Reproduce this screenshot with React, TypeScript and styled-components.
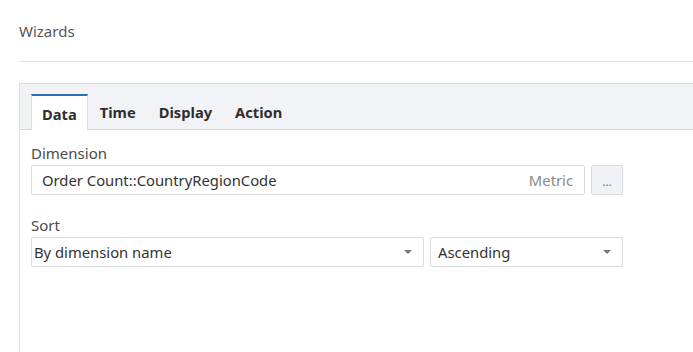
import React, { useState } from 'react';
import styled, { createGlobalStyle } from 'styled-components';

const GlobalStyle = createGlobalStyle`
  html, body {
    margin: 0;
    padding: 0;
    background: #fff;
  }

  body {
    font-family: 'Noto Sans', 'Open Sans', sans-serif;
    color: #333;
    overflow: hidden;
  }
`;

const Page = styled.div`
  width: 693px;
  height: 352px;
  padding: 0 0 0 19px;
  box-sizing: border-box;
  overflow: hidden;
  display: flex;
  flex-direction: column;
`;

const Title = styled.h1`
  margin: 0 0 21px;
  padding-top: 21px;
  height: 62px;
  box-sizing: border-box;
  font-size: 15px;
  font-weight: 400;
  line-height: 20px;
  color: #555;
  border-bottom: 1px solid #e2e2e2;
`;

const Panel = styled.section`
  flex: 1;
  border-left: 1px solid #dcdde0;
  border-top: 1px solid #dcdde0;
  box-sizing: border-box;
`;

const TabStrip = styled.div`
  display: flex;
  align-items: flex-end;
  height: 46px;
  padding-left: 11px;
  box-sizing: border-box;
  background: #f2f3f7;
  border-bottom: 1px solid #d5d6da;
`;

const Tab = styled.button<{ active?: boolean }>`
  all: unset;
  cursor: pointer;
  box-sizing: border-box;
  height: ${(p) => (p.active ? '36px' : '34px')};
  margin-bottom: ${(p) => (p.active ? '-1px' : '0')};
  padding: ${(p) => (p.active ? '1px 10px 0' : '0 11px 0 12px')};
  display: flex;
  align-items: center;
  font-family: 'Noto Sans', 'Open Sans', sans-serif;
  font-size: 14.7px;
  font-weight: 700;
  color: #2e2e2e;
  background: ${(p) => (p.active ? '#fff' : 'transparent')};
  border-top: ${(p) => (p.active ? '2px solid #2a6dba' : 'none')};
  border-left: ${(p) => (p.active ? '1px solid #dcdde0' : 'none')};
  border-right: ${(p) => (p.active ? '1px solid #dcdde0' : 'none')};
`;

const Body = styled.div`
  padding: 13px 0 0 11px;
  display: flex;
  flex-direction: column;
`;

const Label = styled.div`
  font-size: 15px;
  line-height: 20px;
  color: #4a4a4a;
  margin-bottom: 2px;
`;

const Row = styled.div`
  display: flex;
  gap: 6px;
  margin-bottom: 20px;
`;

const Field = styled.div<{ width: number; padLeft?: number }>`
  width: ${(p) => p.width}px;
  height: 30px;
  box-sizing: border-box;
  border: 1px solid #d9dadd;
  border-radius: 2px;
  background: #fff;
  display: flex;
  align-items: center;
  padding: 0 11px 0 ${(p) => p.padLeft ?? 2}px;
  font-size: 14.8px;
  color: #333;
`;

const FieldText = styled.span`
  flex: 1;
  white-space: nowrap;
`;

const Hint = styled.span`
  color: #8a8a8a;
`;

const Arrow = styled.span`
  width: 0;
  height: 0;
  border-left: 4px solid transparent;
  border-right: 4px solid transparent;
  border-top: 4px solid #777;
`;

const DotsButton = styled.button`
  all: unset;
  width: 32px;
  height: 30px;
  box-sizing: border-box;
  border: 1px solid #d9dadd;
  border-radius: 2px;
  background: #f1f2f6;
  color: #777;
  font-family: 'Noto Sans', 'Open Sans', sans-serif;
  font-size: 12px;
  display: flex;
  align-items: center;
  justify-content: center;
  padding-top: 2px;
`;

const tabs = ['Data', 'Time', 'Display', 'Action'];

function App(): JSX.Element {
  const [current, setCurrent] = useState<string>('Data');

  return (
    <>
      <GlobalStyle />
      <Page>
        <Title>Wizards</Title>
        <Panel>
          <TabStrip>
            {tabs.map((t) => (
              <Tab key={t} active={current === t} onClick={() => setCurrent(t)}>
                {t}
              </Tab>
            ))}
          </TabStrip>
          <Body>
            <Label>Dimension</Label>
            <Row>
              <Field width={554} padLeft={10}>
                <FieldText>Order Count::CountryRegionCode</FieldText>
                <Hint>Metric</Hint>
              </Field>
              <DotsButton>...</DotsButton>
            </Row>
            <Label>Sort</Label>
            <Row>
              <Field width={393}>
                <FieldText>By dimension name</FieldText>
                <Arrow />
              </Field>
              <Field width={193} padLeft={7}>
                <FieldText>Ascending</FieldText>
                <Arrow />
              </Field>
            </Row>
          </Body>
        </Panel>
      </Page>
    </>
  );
}

export default App;
